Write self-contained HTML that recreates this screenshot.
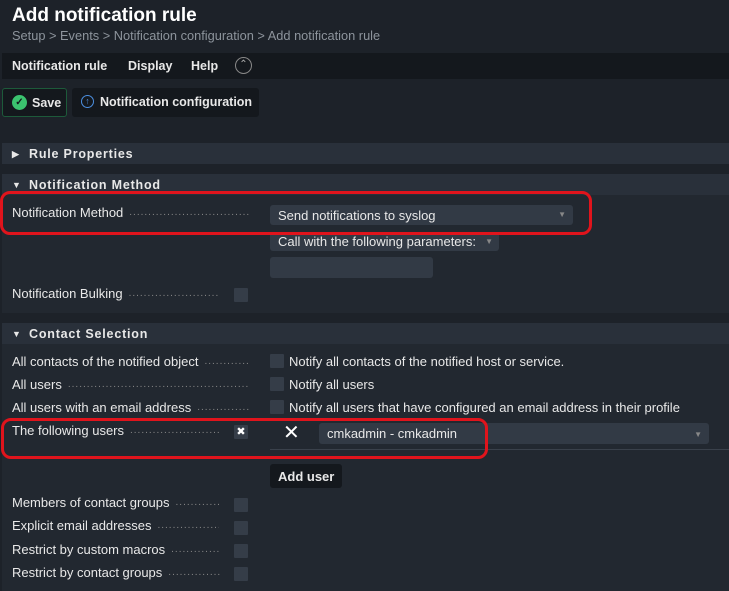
<!DOCTYPE html>
<html><head><meta charset="utf-8"><style>
*{margin:0;padding:0;box-sizing:border-box}
body{width:729px;height:591px;background:#1d2229;font-family:"Liberation Sans",sans-serif;color:#e8e8e8;position:relative;overflow:hidden;font-size:13px}
.a{position:absolute;white-space:nowrap}
h1{position:absolute;left:12px;top:5px;font-size:19px;font-weight:bold;color:#fff}
.bc{left:12px;top:28px;color:#8d949c;font-size:12.8px}
.menu{left:2px;top:53px;width:727px;height:26px;background:#14181d}
.menu span{position:absolute;top:6px;font-weight:bold;font-size:12.5px}
.btn{position:absolute;height:29px;top:88px;background:#14181d;border-radius:3px;font-weight:bold;font-size:12.5px}
.sec{position:absolute;left:2px;width:727px;background:#222830}
.sh{position:absolute;left:2px;width:727px;height:21px;background:#29303a;font-weight:bold;font-size:12.5px;letter-spacing:.8px}
.sh span{position:absolute;left:27px;top:4px}
.sh i{position:absolute;left:10px;top:6px;font-style:normal;font-size:9px}
.lbl{position:absolute;left:12px;font-size:13px;color:#e8e8e8;display:flex;white-space:nowrap;overflow:hidden}
.lbl b{flex:1;overflow:hidden;font-weight:normal;color:#888;margin-left:6px;font-size:10px;letter-spacing:1px;padding-top:2px}
.cb{position:absolute;width:14px;height:14px;background:#353d48;border-radius:1px}
.sel{position:absolute;background:#323a45;border-radius:3px;height:20px;font-size:13px}
.red{position:absolute;border:3px solid #e0141c;border-radius:10px}
.t{position:absolute;font-size:13px;white-space:nowrap}
</style></head><body>
<h1>Add notification rule</h1>
<div class="a bc">Setup &gt; Events &gt; Notification configuration &gt; Add notification rule</div>
<div class="a menu"><span style="left:10px">Notification rule</span><span style="left:126px">Display</span><span style="left:189px">Help</span>
<span style="left:233px;top:4px;width:17px;height:17px;border:1.5px solid #888;border-radius:50%;font-size:10px;color:#aaa;text-align:center;line-height:14px;font-weight:normal">&#8963;</span></div>
<div class="btn" style="left:2px;width:65px;border:1px solid #1d5a3a"><span class="a" style="left:9px;top:6px;width:15px;height:15px;border-radius:50%;background:#3bc36f;color:#14181d;font-size:10px;text-align:center;line-height:15px">&#10003;</span><span class="a" style="left:29px;top:7px">Save</span></div>
<div class="btn" style="left:72px;width:187px"><span class="a" style="left:9px;top:7px;width:13px;height:13px;border-radius:50%;border:1.5px solid #4c8fe0;color:#4c8fe0;font-size:9px;text-align:center;line-height:10px">&#8593;</span><span class="a" style="left:28px;top:7px">Notification configuration</span></div>

<div class="sh" style="top:143px"><i>&#9654;</i><span>Rule Properties</span></div>
<div class="sec" style="top:174px;height:139px"></div>
<div class="sh" style="top:174px"><i>&#9660;</i><span>Notification Method</span></div>
<div class="lbl" style="top:205px;width:238px">Notification Method<b>............................................................................</b></div>
<div class="sel" style="left:270px;top:205px;width:303px"><span class="a" style="left:8px;top:3px">Send notifications to syslog</span><span class="a" style="right:7px;top:5px;font-size:8px;color:#888">&#9660;</span></div>
<div class="sel" style="left:270px;top:232px;width:229px;height:19px"><span class="a" style="left:8px;top:2px">Call with the following parameters:</span><span class="a" style="right:6px;top:5px;font-size:8px;color:#888">&#9660;</span></div>
<div class="sel" style="left:270px;top:257px;width:163px;height:21px"></div>
<div class="lbl" style="top:286px;width:208px">Notification Bulking<b>............................................................................</b></div>
<div class="cb" style="left:234px;top:288px"></div>
<div class="red" style="left:0px;top:191px;width:592px;height:44px"></div>

<div class="sec" style="top:323px;height:268px"></div>
<div class="sh" style="top:323px"><i>&#9660;</i><span>Contact Selection</span></div>
<div class="lbl" style="top:354px;width:237px">All contacts of the notified object<b>............................................................................</b></div>
<div class="cb" style="left:270px;top:354px"></div><div class="t" style="left:289px;top:354px">Notify all contacts of the notified host or service.</div>
<div class="lbl" style="top:377px;width:237px">All users<b>..................................................................................................................</b></div>
<div class="cb" style="left:270px;top:377px"></div><div class="t" style="left:289px;top:377px">Notify all users</div>
<div class="lbl" style="top:400px;width:237px">All users with an email address<b>............................................................................</b></div>
<div class="cb" style="left:270px;top:400px"></div><div class="t" style="left:289px;top:400px">Notify all users that have configured an email address in their profile</div>
<div class="lbl" style="top:423px;width:207px">The following users<b>............................................................................</b></div>
<div class="cb" style="left:234px;top:425px;color:#fff;font-size:11px;text-align:center;line-height:14px">&#10006;</div>
<div class="a" style="left:283px;top:420px;font-size:20px;color:#fff">&#10005;</div>
<div class="sel" style="left:319px;top:423px;width:390px;height:21px"><span class="a" style="left:8px;top:3px">cmkadmin - cmkadmin</span><span class="a" style="right:7px;top:7px;font-size:8px;color:#888">&#9660;</span></div>
<div class="a" style="left:270px;top:449px;width:459px;height:1px;background:#3a414b"></div>
<div class="red" style="left:1px;top:418px;width:487px;height:41px"></div>
<div class="a" style="left:270px;top:464px;width:72px;height:24px;background:#14181d;border-radius:3px;font-weight:bold;padding:5px 0 0 8px">Add user</div>
<div class="lbl" style="top:495px;width:209px">Members of contact groups<b>............................................................................</b></div><div class="cb" style="left:234px;top:498px"></div>
<div class="lbl" style="top:518px;width:207px">Explicit email addresses<b>............................................................................</b></div><div class="cb" style="left:234px;top:521px"></div>
<div class="lbl" style="top:542px;width:209px">Restrict by custom macros<b>............................................................................</b></div><div class="cb" style="left:234px;top:544px"></div>
<div class="lbl" style="top:565px;width:209px">Restrict by contact groups<b>............................................................................</b></div><div class="cb" style="left:234px;top:567px"></div>
</body></html>
